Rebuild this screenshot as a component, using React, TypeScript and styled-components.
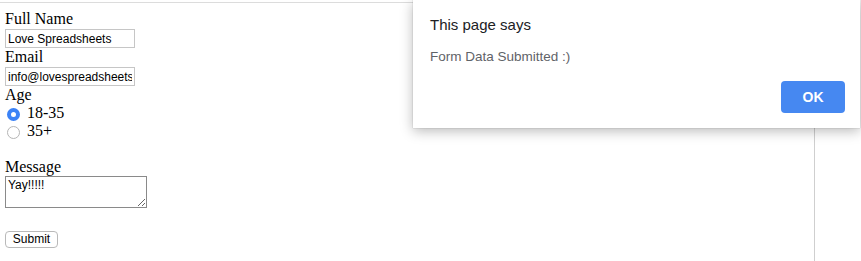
import React from "react";
import styled, { createGlobalStyle } from "styled-components";

const Global = createGlobalStyle`
  html, body { margin: 0; padding: 0; background: #fff; overflow: hidden; }
  body { font-family: "Liberation Serif", "Times New Roman", serif; font-size: 16px; color: #000; }
`;

const Page = styled.div`
  position: relative;
  width: 861px;
  height: 261px;
  overflow: hidden;
`;

const Frame = styled.div`
  box-sizing: border-box;
  margin-top: 2px;
  width: 815px;
  height: 259px;
  border-top: 1px solid #dcdcdc;
  border-right: 1px solid #cfcfcf;
  padding: 7px 0 0 5px;
`;

const Form = styled.form`
  display: flex;
  flex-direction: column;
  align-items: flex-start;
`;

const Label = styled.div<{ $gapTop?: number }>`
  height: 18px;
  line-height: 18px;
  margin-top: ${(p) => p.$gapTop ?? 0}px;
`;

const TextInput = styled.input`
  box-sizing: border-box;
  width: 130px;
  height: 19px;
  margin: 1px 0 0 0;
  padding: 1px 2px;
  border: 1px solid #c6c6c6;
  font-family: "Liberation Sans", Arial, sans-serif;
  font-size: 12px;
  color: #000;
  outline: none;
  background: #fff;
`;

const RadioRow = styled.label`
  display: flex;
  align-items: center;
  height: 18px;
  line-height: 18px;
`;

const Radio = styled.input`
  appearance: none;
  box-sizing: border-box;
  width: 13px;
  height: 13px;
  margin: 2px 7px 0 2px;
  border-radius: 50%;
  border: 1px solid #b5b5b5;
  background: #fff;
  &:checked {
    border: 4px solid #3b82f6;
    background: #fff;
  }
`;

const Area = styled.textarea`
  box-sizing: border-box;
  width: 142px;
  height: 32px;
  margin: 0;
  padding: 1px 2px;
  border: 1px solid #8a8a8a;
  font-family: "Liberation Sans", Arial, sans-serif;
  font-size: 12px;
  line-height: 14px;
  outline: none;
`;

const SubmitButton = styled.button`
  box-sizing: border-box;
  margin-top: 23px;
  width: 53px;
  height: 17px;
  padding: 0;
  border: 1px solid #b9b9b9;
  border-radius: 4px;
  background: #fff;
  font-family: "Liberation Sans", Arial, sans-serif;
  font-size: 12px;
  line-height: 15px;
  color: #000;
`;

const Dialog = styled.div`
  position: absolute;
  top: 0;
  left: 413px;
  box-sizing: border-box;
  width: 447px;
  height: 128px;
  background: #fff;
  box-shadow: 0 3px 12px rgba(0, 0, 0, 0.28), 0 0 1px rgba(0, 0, 0, 0.3);
  padding: 16px 15px 0 17px;
  font-family: "Liberation Sans", Arial, sans-serif;
  display: flex;
  flex-direction: column;
`;

const Title = styled.div`
  font-size: 15px;
  line-height: 18px;
  color: #202124;
`;

const Message = styled.div`
  margin-top: 15px;
  font-size: 13.5px;
  line-height: 16px;
  color: #5f6368;
`;

const Actions = styled.div`
  display: flex;
  justify-content: flex-end;
  margin-top: 16px;
`;

const OkButton = styled.button`
  width: 64px;
  height: 32px;
  border: none;
  border-radius: 4px;
  background: #4688f1;
  color: #fff;
  font-family: "Liberation Sans", Arial, sans-serif;
  font-weight: bold;
  font-size: 14px;
  padding: 0;
`;

export default function App() {
  return (
    <>
      <Global />
      <Page>
        <Frame>
          <Form onSubmit={(e) => e.preventDefault()}>
            <Label>Full Name</Label>
            <TextInput defaultValue="Love Spreadsheets" />
            <Label>Email</Label>
            <TextInput defaultValue="info@lovespreadsheets.com" />
            <Label>Age</Label>
            <RadioRow>
              <Radio type="radio" name="age" defaultChecked />
              18-35
            </RadioRow>
            <RadioRow>
              <Radio type="radio" name="age" />
              35+
            </RadioRow>
            <Label $gapTop={18}>Message</Label>
            <Area defaultValue="Yay!!!!!" />
            <SubmitButton type="submit">Submit</SubmitButton>
          </Form>
        </Frame>
        <Dialog>
          <Title>This page says</Title>
          <Message>Form Data Submitted :)</Message>
          <Actions>
            <OkButton>OK</OkButton>
          </Actions>
        </Dialog>
      </Page>
    </>
  );
}
